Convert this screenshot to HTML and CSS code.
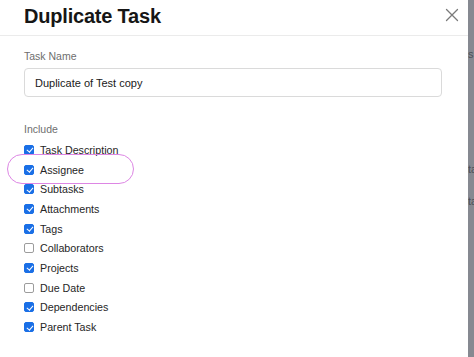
FILE: index.html
```html
<!DOCTYPE html>
<html>
  <head>
    <meta charset="utf-8">
    <title>Duplicate Task</title>
    <link rel="stylesheet" href="styles.css">
  </head>

  <body>
    <div class="modal">
      <div class="modal-header">
        <h1>Duplicate Task</h1>
        <button class="close" aria-label="Close">
          <svg width="14" height="14" viewBox="0 0 14 14">
            <path d="M1.5 1.5 L12.5 12.5 M12.5 1.5 L1.5 12.5" stroke="#7a7a7a" stroke-width="1.3" fill="none" stroke-linecap="round"/>
          </svg>
        </button>
      </div>

      <div class="modal-body">
        <label class="field-label" for="taskName">Task Name</label>
        <input class="text-input" id="taskName" type="text" value="Duplicate of Test copy">

        <p class="field-label include-label">Include</p>
        <ul class="options">
          <li><input type="checkbox" checked> Task Description</li>
          <li class="highlight"><input type="checkbox" checked> Assignee</li>
          <li><input type="checkbox" checked> Subtasks</li>
          <li><input type="checkbox" checked> Attachments</li>
          <li><input type="checkbox" checked> Tags</li>
          <li><input type="checkbox"> Collaborators</li>
          <li><input type="checkbox" checked> Projects</li>
          <li><input type="checkbox"> Due Date</li>
          <li><input type="checkbox" checked> Dependencies</li>
          <li><input type="checkbox" checked> Parent Task</li>
        </ul>
      </div>
    </div>

    <div class="backdrop">
      <span class="frag frag-top">s</span>
      <span class="frag frag-mid">ta</span>
      <span class="frag frag-low">ta</span>
    </div>
  </body>
</html>
```

FILE: styles.css
```css
body {
  margin: 0;
  height: 357px;
  overflow: hidden;
  display: flex;
  font-family: 'Liberation Sans', Arial, sans-serif;
  color: #1f1f1f;
}

.modal {
  width: 468px;
  flex-shrink: 0;
  background-color: #fff;
}

.modal-header {
  height: 36px;
  box-sizing: border-box;
  border-bottom: 1px solid #ebebeb;
  display: flex;
  align-items: center;
  justify-content: space-between;
  padding: 0 9px 0 24px;
}

.modal-header h1 {
  margin: 0;
  font-size: 20px;
  font-weight: bold;
  color: #161616;
  letter-spacing: -0.2px;
  padding-bottom: 2px;
}

.close {
  background: none;
  border: none;
  padding: 0;
  width: 14px;
  height: 14px;
  margin-bottom: 6px;
  cursor: pointer;
}

.close svg {
  display: block;
}

.modal-body {
  padding: 13px 26px 0 24px;
}

.field-label {
  display: block;
  margin: 0;
  font-size: 10.5px;
  line-height: 14px;
  color: #6e6e6e;
}

.text-input {
  display: block;
  box-sizing: border-box;
  width: 100%;
  height: 29px;
  margin-top: 5px;
  padding: 0 10px;
  border: 1px solid #dadada;
  border-radius: 4px;
  font-family: inherit;
  font-size: 11px;
  color: #202020;
  outline: none;
}

.include-label {
  margin-top: 25px;
}

.options {
  list-style: none;
  margin: 4px 0 0;
  padding: 0;
}

.options li {
  display: flex;
  align-items: center;
  height: 19.7px;
  font-size: 10.7px;
  color: #262626;
}

.options input {
  appearance: none;
  -webkit-appearance: none;
  width: 10px;
  height: 10px;
  margin: 0 6px 0 0;
  box-sizing: border-box;
  border: 1px solid #9c9c9c;
  border-radius: 2px;
  background: #fff;
  position: relative;
}

.options input:checked {
  background: #1a6fe6;
  border-color: #1a6fe6;
}

.options input:checked::after {
  content: "";
  position: absolute;
  left: 2.5px;
  top: 0.5px;
  width: 2.5px;
  height: 5px;
  border: solid #fff;
  border-width: 0 1.4px 1.4px 0;
  transform: rotate(40deg);
}

.highlight {
  position: relative;
}

.highlight::before {
  content: "";
  position: absolute;
  left: -17px;
  top: -6px;
  width: 127px;
  height: 30px;
  box-sizing: border-box;
  border: 1.5px solid #dd86e4;
  border-radius: 15px;
}

.backdrop {
  flex: 1;
  background-color: #868991;
  display: flex;
  flex-direction: column;
  align-items: flex-start;
  overflow: hidden;
  font-size: 11px;
  line-height: 12px;
  color: #4d5058;
}

.frag {
  display: block;
  white-space: nowrap;
}

.frag-top {
  margin-top: 48px;
}

.frag-mid {
  margin-top: 103px;
}

.frag-low {
  margin-top: 20px;
}
```
